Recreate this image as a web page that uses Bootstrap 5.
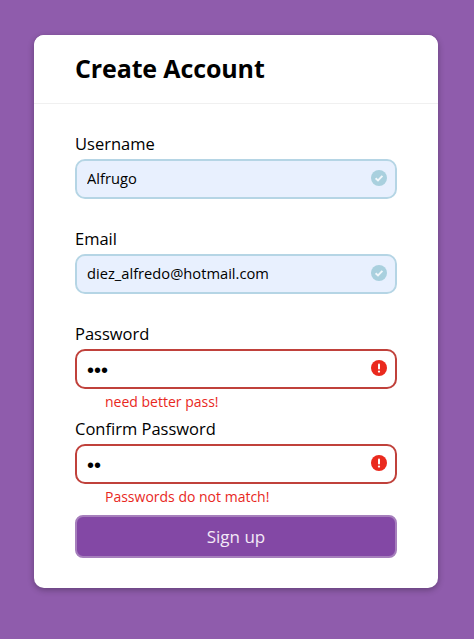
<!DOCTYPE html>
<html lang="en">
<head>
<meta charset="utf-8">
<title>Create Account</title>
<link href="https://cdn.jsdelivr.net/npm/bootstrap@5.3.0/dist/css/bootstrap.min.css" rel="stylesheet">
<style>
html, body { height: 100%; }
body { background: #8f5cac; font-family: "Open Sans", "DejaVu Sans", sans-serif; color: #000; padding: 35px 36px 51px 34px; overflow: hidden; }
.signup-card { width: 404px; height: 553px; border: 0; border-radius: 10px; background: #fff; box-shadow: 0 2px 6px rgba(0,0,0,.3); overflow: hidden; }
.signup-head { height: 69px; padding: 15px 41px 0; background: #fff; border-bottom: 1px solid #f0f0f0; border-radius: 0; }
.signup-head h2 { margin: 0; font-size: 25px; line-height: 36px; font-weight: 700; letter-spacing: -.13px; color: #000; }
.signup-body { padding: 30px 41px; }
.field-block { height: 95px; }
.field-label { display: block; margin: 0 0 5px; height: 20px; font-size: 16.5px; line-height: 20px; }
.field-box { height: 40px; }
.field-box .form-control { height: 40px; padding: 0 36px 2px 10px; border-width: 2px; border-radius: 10px; font-family: "Open Sans", "DejaVu Sans", sans-serif; font-size: 14.7px; background-image: none; box-shadow: none; color: #000; }
.field-box.ok .form-control { background-color: #e8f0fe; border-color: #b5d5e5; }
.field-box.bad .form-control { background-color: #fff; border-color: #c0413b; }
.field-box.bad .form-control[type=password] { font-family: "Liberation Sans", sans-serif; font-size: 20px; letter-spacing: 0; padding-top: 3px; padding-bottom: 0; }
.field-icon { position: absolute; top: 11px; right: 10px; width: 16px; height: 16px; display: block; }
.field-msg { display: block; margin: 3px 0 0 30px; font-size: 14px; line-height: 20px; color: #e8281e; }
.signup-btn { height: 43px; margin-top: 1px; font-size: 17px; line-height: 1; color: #f3e9f7; background: #8348a5; border: 2px solid #a67fbc; border-radius: 8px; padding: 0; }
.signup-btn:hover { background: #8348a5; color: #f3e9f7; border-color: #a67fbc; }
</style>
</head>
<body>
<div class="card signup-card">
  <div class="card-header signup-head"><h2>Create Account</h2></div>
  <form class="card-body signup-body">
    <div class="field-block">
      <label class="field-label" for="u">Username</label>
      <div class="field-box ok position-relative">
        <input id="u" class="form-control" type="text" value="Alfrugo">
        <svg class="field-icon" viewBox="0 0 16 16"><circle cx="8" cy="8" r="8" fill="#a9d0de"/><path d="M4.6 8.3 7 10.5 11.4 5.9" fill="none" stroke="#f1f7fb" stroke-width="1.9"/></svg>
      </div>
    </div>
    <div class="field-block">
      <label class="field-label" for="e">Email</label>
      <div class="field-box ok position-relative">
        <input id="e" class="form-control" type="text" value="diez_alfredo@hotmail.com">
        <svg class="field-icon" viewBox="0 0 16 16"><circle cx="8" cy="8" r="8" fill="#a9d0de"/><path d="M4.6 8.3 7 10.5 11.4 5.9" fill="none" stroke="#f1f7fb" stroke-width="1.9"/></svg>
      </div>
    </div>
    <div class="field-block">
      <label class="field-label" for="p">Password</label>
      <div class="field-box bad position-relative">
        <input id="p" class="form-control" type="password" value="abc">
        <svg class="field-icon" viewBox="0 0 16 16"><circle cx="8" cy="8" r="8" fill="#ea2a1e"/><rect x="7" y="3.4" width="2" height="6" rx="1" fill="#fff"/><circle cx="8" cy="11.6" r="1.15" fill="#fff"/></svg>
      </div>
      <small class="field-msg">need better pass!</small>
    </div>
    <div class="field-block">
      <label class="field-label" for="c">Confirm Password</label>
      <div class="field-box bad position-relative">
        <input id="c" class="form-control" type="password" value="ab">
        <svg class="field-icon" viewBox="0 0 16 16"><circle cx="8" cy="8" r="8" fill="#ea2a1e"/><rect x="7" y="3.4" width="2" height="6" rx="1" fill="#fff"/><circle cx="8" cy="11.6" r="1.15" fill="#fff"/></svg>
      </div>
      <small class="field-msg">Passwords do not match!</small>
    </div>
    <button type="button" class="btn signup-btn w-100 d-block">Sign up</button>
  </form>
</div>
<script src="https://cdn.jsdelivr.net/npm/bootstrap@5.3.0/dist/js/bootstrap.bundle.min.js"></script>
</body>
</html>
